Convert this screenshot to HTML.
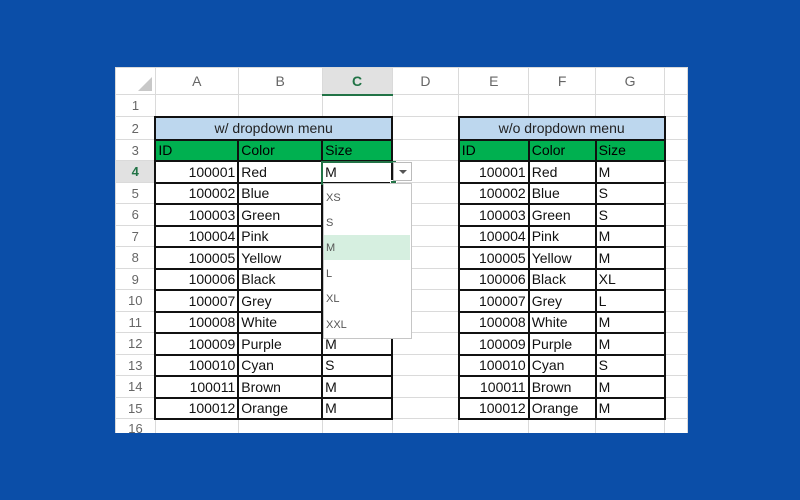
<!DOCTYPE html>
<html><head><meta charset="utf-8"><style>
body{margin:0;width:800px;height:500px;background:#0b4ea8;overflow:hidden;font-family:"Liberation Sans",sans-serif}
#sh{position:absolute;left:115px;top:67px;width:573px;height:366px;background:#fff;overflow:hidden}
table{border-collapse:collapse;table-layout:fixed;position:absolute;left:0;top:0}
td{border:1px solid #dadada;padding:0 2px;font-size:14px;color:#111;white-space:nowrap;overflow:hidden;line-height:1}
tr.h td{background:#fff;color:#666;text-align:center;font-size:14px}
td.rn{background:#fff;color:#666;text-align:center;font-size:13px}
td.b{border:2px solid #111}
td.bl{background:#bdd7ee;text-align:center;color:#222}
td.g{background:#00b050;font-weight:normal;color:#000}
td.r{text-align:right}
.sel{color:#217346!important;font-weight:bold;background:#e1e1e1!important;border-bottom:2px solid #217346!important}
</style></head><body>
<div id="sh">
<table>
<colgroup><col style="width:40px"><col style="width:83px"><col style="width:84px"><col style="width:70px"><col style="width:67px"><col style="width:70px"><col style="width:67px"><col style="width:69px"><col style="width:23px"></colgroup>
<tr class="h" style="height:27px"><td style="position:relative"><div style="position:absolute;right:3px;bottom:3px;width:0;height:0;border-left:14px solid transparent;border-bottom:14px solid #c8c8c8"></div></td><td>A</td><td>B</td><td class="sel">C</td><td>D</td><td>E</td><td>F</td><td>G</td><td></td></tr>
<tr style="height:22px"><td class="rn">1</td><td></td><td></td><td></td><td></td><td></td><td></td><td></td><td></td></tr>
<tr style="height:23px"><td class="rn">2</td><td class="b bl" colspan="3">w/ dropdown menu</td><td></td><td class="b bl" colspan="3">w/o dropdown menu</td><td></td></tr>
<tr style="height:21px"><td class="rn">3</td><td class="b g">ID</td><td class="b g">Color</td><td class="b g">Size</td><td></td><td class="b g">ID</td><td class="b g">Color</td><td class="b g">Size</td><td></td></tr>
<tr style="height:22px"><td class="rn" style="color:#217346;font-weight:bold;background:#e1e1e1">4</td><td class="b r">100001</td><td class="b">Red</td><td class="b">M</td><td></td><td class="b r">100001</td><td class="b">Red</td><td class="b">M</td><td></td></tr>
<tr style="height:21px"><td class="rn">5</td><td class="b r">100002</td><td class="b">Blue</td><td class="b">S</td><td></td><td class="b r">100002</td><td class="b">Blue</td><td class="b">S</td><td></td></tr>
<tr style="height:22px"><td class="rn">6</td><td class="b r">100003</td><td class="b">Green</td><td class="b">S</td><td></td><td class="b r">100003</td><td class="b">Green</td><td class="b">S</td><td></td></tr>
<tr style="height:21px"><td class="rn">7</td><td class="b r">100004</td><td class="b">Pink</td><td class="b">M</td><td></td><td class="b r">100004</td><td class="b">Pink</td><td class="b">M</td><td></td></tr>
<tr style="height:22px"><td class="rn">8</td><td class="b r">100005</td><td class="b">Yellow</td><td class="b">M</td><td></td><td class="b r">100005</td><td class="b">Yellow</td><td class="b">M</td><td></td></tr>
<tr style="height:21px"><td class="rn">9</td><td class="b r">100006</td><td class="b">Black</td><td class="b">XL</td><td></td><td class="b r">100006</td><td class="b">Black</td><td class="b">XL</td><td></td></tr>
<tr style="height:22px"><td class="rn">10</td><td class="b r">100007</td><td class="b">Grey</td><td class="b">L</td><td></td><td class="b r">100007</td><td class="b">Grey</td><td class="b">L</td><td></td></tr>
<tr style="height:21px"><td class="rn">11</td><td class="b r">100008</td><td class="b">White</td><td class="b">M</td><td></td><td class="b r">100008</td><td class="b">White</td><td class="b">M</td><td></td></tr>
<tr style="height:22px"><td class="rn">12</td><td class="b r">100009</td><td class="b">Purple</td><td class="b">M</td><td></td><td class="b r">100009</td><td class="b">Purple</td><td class="b">M</td><td></td></tr>
<tr style="height:21px"><td class="rn">13</td><td class="b r">100010</td><td class="b">Cyan</td><td class="b">S</td><td></td><td class="b r">100010</td><td class="b">Cyan</td><td class="b">S</td><td></td></tr>
<tr style="height:22px"><td class="rn">14</td><td class="b r">100011</td><td class="b">Brown</td><td class="b">M</td><td></td><td class="b r">100011</td><td class="b">Brown</td><td class="b">M</td><td></td></tr>
<tr style="height:21px"><td class="rn">15</td><td class="b r">100012</td><td class="b">Orange</td><td class="b">M</td><td></td><td class="b r">100012</td><td class="b">Orange</td><td class="b">M</td><td></td></tr>
<tr style="height:20px"><td class="rn">16</td><td></td><td></td><td></td><td></td><td></td><td></td><td></td><td></td></tr>
</table>
<!-- selected cell -->
<div style="position:absolute;left:206px;top:94px;width:71px;height:20px;border:2px solid #217346;box-sizing:content-box;pointer-events:none"></div>
<div style="position:absolute;left:275px;top:113px;width:5px;height:5px;background:#217346;border:1px solid #fff"></div>
<!-- dropdown button -->
<div style="position:absolute;left:278px;top:95px;width:17px;height:17px;border:1px solid #bbb;background:#fff"><div style="position:absolute;left:5px;top:7px;width:0;height:0;border-left:4px solid transparent;border-right:4px solid transparent;border-top:4px solid #555"></div></div>
<!-- dropdown list -->
<div style="position:absolute;left:208px;top:116px;width:87px;height:154px;background:#fff;border:1px solid #c6c6c6;font-size:11px;color:#555">
<div style="position:absolute;left:2px;top:8px">XS</div>
<div style="position:absolute;left:2px;top:33px">S</div>
<div style="position:absolute;left:0;top:51px;width:86px;height:25px;background:#d6efe0"></div>
<div style="position:absolute;left:2px;top:58px">M</div>
<div style="position:absolute;left:2px;top:84px">L</div>
<div style="position:absolute;left:2px;top:109px">XL</div>
<div style="position:absolute;left:2px;top:135px">XXL</div>
</div>
</div>
</body></html>
